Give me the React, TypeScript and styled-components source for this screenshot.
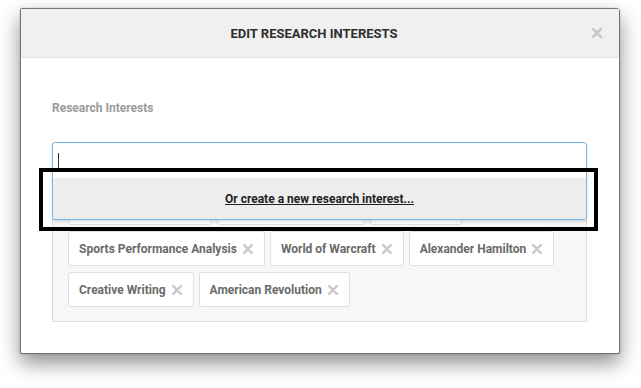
import React from "react";
import styled, { createGlobalStyle } from "styled-components";

const Global = createGlobalStyle`
  html, body { margin: 0; padding: 0; background: #fff; }
  body { font-family: Roboto, "Liberation Sans", Arial, sans-serif; }
  * { box-sizing: border-box; }
`;

const Page = styled.div`
  width: 641px;
  height: 388px;
  padding: 8px 21px 0 20px;
  overflow: hidden;
`;

const Modal = styled.div`
  width: 600px;
  height: 346px;
  background: #fff;
  border: 1px solid #747474;
  border-radius: 3px 4px 2px 2px;
  box-shadow: 0 0 1px rgba(0, 0, 0, 0.6), 0 9px 20px rgba(0, 0, 0, 0.45);
  display: flex;
  flex-direction: column;
`;

const Header = styled.div`
  height: 49px;
  flex: none;
  background: #f0f0f0;
  border-bottom: 1px solid #e2e2e2;
  display: flex;
  align-items: center;
  padding: 0 16px 0 16px;
`;

const Title = styled.h1`
  flex: 1;
  margin: 0;
  text-align: center;
  font-size: 13px;
  font-weight: 700;
  color: #2e2e2e;
  letter-spacing: 0;
`;

const CloseButton = styled.button`
  border: 0;
  background: none;
  padding: 0;
  width: 12px;
  height: 12px;
  display: flex;
  align-items: center;
  justify-content: center;
  cursor: pointer;
`;

const Body = styled.div`
  padding: 42px 32px 32px 31px;
  display: flex;
  flex-direction: column;
`;

const Label = styled.label`
  font-size: 12px;
  font-weight: 700;
  line-height: 16px;
  color: #9b9b9b;
  margin-bottom: 26px;
`;

const Field = styled.div`
  position: relative;
  height: 36px;
  flex: none;
`;

const Popover = styled.div`
  position: absolute;
  top: 0;
  left: 0;
  right: 0;
  border: 1px solid #74b6ee;
  border-radius: 3px;
  background: #fff;
  box-shadow: 0 2px 3px rgba(0, 0, 0, 0.12);
  z-index: 2;
`;

const InputArea = styled.div`
  height: 35px;
  padding: 4px 5px;
  display: flex;
  align-items: center;
`;

const Caret = styled.span`
  display: block;
  width: 1px;
  height: 16px;
  background: #333;
`;

const Suggestion = styled.div`
  height: 41px;
  background: #ededed;
  border-radius: 0 0 3px 3px;
  display: flex;
  align-items: center;
  justify-content: center;
`;

const CreateLink = styled.a`
  font-size: 12px;
  font-weight: 700;
  color: #222;
  text-decoration: underline;
  cursor: pointer;
`;

const Annotation = styled.div`
  position: absolute;
  top: 26px;
  left: -13px;
  width: 559px;
  height: 63px;
  border: 4px solid #000;
  pointer-events: none;
  z-index: 3;
`;

const TagBox = styled.div`
  background: #f7f7f7;
  border: 1px solid #dcdcdc;
  border-top-color: transparent;
  padding: 11px 15px 14px 15px;
  display: flex;
  flex-wrap: wrap;
  gap: 6px 5px;
`;

const Tag = styled.div`
  height: 35px;
  background: #fff;
  border: 1px solid #dedede;
  border-radius: 3px;
  display: flex;
  align-items: center;
  gap: 6px;
  padding: 0 11px 0 10px;
  font-size: 12px;
  font-weight: 700;
  color: #6a6a6a;
`;

const HiddenTag = styled(Tag)<{ $w: number }>`
  width: ${(p) => p.$w}px;
`;

const RemoveIcon = styled.svg`
  width: 10px;
  height: 10px;
  flex: none;
`;

const Cross = ({ color }: { color: string }) => (
  <RemoveIcon viewBox="0 0 10 10">
    <path d="M1.2 1.2 L8.8 8.8 M8.8 1.2 L1.2 8.8" stroke={color} strokeWidth="2.4" strokeLinecap="round" />
  </RemoveIcon>
);

const hiddenRow = [144, 148, 92];

const tags = [
  "Sports Performance Analysis",
  "World of Warcraft",
  "Alexander Hamilton",
  "Creative Writing",
  "American Revolution",
];

export default function App() {
  return (
    <>
      <Global />
      <Page>
        <Modal>
          <Header>
            <Title>EDIT RESEARCH INTERESTS</Title>
            <CloseButton aria-label="Close">
              <Cross color="#c4c4c4" />
            </CloseButton>
          </Header>
          <Body>
            <Label>Research Interests</Label>
            <Field>
              <Popover>
                <InputArea>
                  <Caret />
                </InputArea>
                <Suggestion>
                  <CreateLink>Or create a new research interest...</CreateLink>
                </Suggestion>
              </Popover>
              <Annotation />
            </Field>
            <TagBox>
              {hiddenRow.map((w, i) => (
                <HiddenTag key={i} $w={w} aria-hidden="true" />
              ))}
              {tags.map((t) => (
                <Tag key={t}>
                  {t}
                  <Cross color="#c9c9c9" />
                </Tag>
              ))}
            </TagBox>
          </Body>
        </Modal>
      </Page>
    </>
  );
}
